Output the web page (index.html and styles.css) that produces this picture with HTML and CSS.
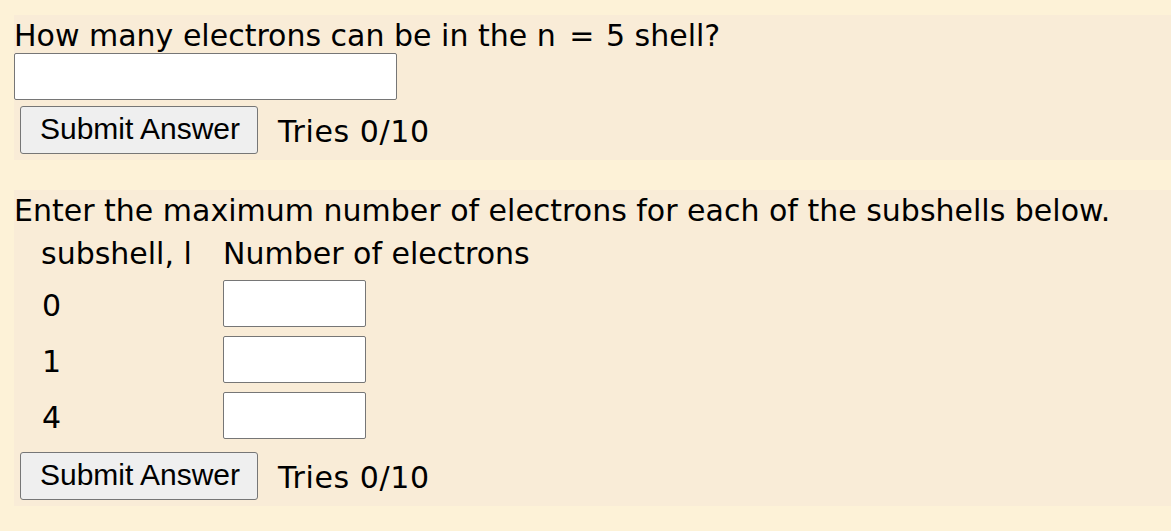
FILE: index.html
```html
<!DOCTYPE html>
<html>
<head>
<meta charset="utf-8">
<link rel="stylesheet" href="styles.css">
</head>
<body>
<div class="page">
  <section class="problem problem-one">
    <div class="question">How many electrons can be in the n <span class="op">=</span> 5 shell?</div>
    <input class="answer answer-wide" type="text">
    <div class="submit-row">
      <button class="submit" type="button">Submit Answer</button>
      <span class="tries">Tries 0/10</span>
    </div>
  </section>

  <section class="problem problem-two">
    <div class="question">Enter the maximum number of electrons for each of the subshells below.</div>
    <div class="subshell-table">
      <div class="cell head">subshell, l</div>
      <div class="cell head">Number of electrons</div>
      <div class="cell label">0</div>
      <div class="cell"><input class="answer answer-small" type="text"></div>
      <div class="cell label">1</div>
      <div class="cell"><input class="answer answer-small" type="text"></div>
      <div class="cell label">4</div>
      <div class="cell"><input class="answer answer-small" type="text"></div>
    </div>
    <div class="submit-row submit-row-two">
      <button class="submit" type="button">Submit Answer</button>
      <span class="tries">Tries 0/10</span>
    </div>
  </section>
</div>
</body>
</html>
```

FILE: styles.css
```css
html, body {
  margin: 0;
  padding: 0;
}

body {
  background: #fdf2d7;
  font-family: "DejaVu Sans", Verdana, sans-serif;
  font-size: 30px;
  color: #000;
}

.page {
  padding: 15px 0 0 14px;
  display: flex;
  flex-direction: column;
  gap: 30px;
}

.problem {
  background: #f9ecd7;
  padding: 3px 0 6px 0;
}

.question {
  line-height: 35px;
  height: 35px;
  white-space: nowrap;
}

.op {
  margin: 0 2px 0 4px;
}

.answer {
  display: block;
  box-sizing: border-box;
  background: #fff;
  border: 1px solid #767676;
  border-radius: 2px;
  margin: 0;
  padding: 0;
  font: inherit;
}

.answer-wide {
  width: 383px;
  height: 47px;
}

.answer-small {
  width: 143px;
  height: 47px;
}

.submit-row {
  display: flex;
  align-items: center;
  margin-top: 6px;
  margin-left: 6px;
  gap: 20px;
}

.submit-row-two {
  margin-top: 13px;
}

.submit {
  box-sizing: border-box;
  width: 238px;
  height: 48px;
  margin: 0;
  padding: 0;
  background: #efefef;
  border: 1px solid #767676;
  border-radius: 3px;
  font-family: "Liberation Sans", Arial, sans-serif;
  font-size: 30px;
  color: #000;
  line-height: 1;
  padding-bottom: 2px;
  padding-left: 2px;
}

.tries {
  line-height: 35px;
  padding-top: 3px;
  letter-spacing: 0.6px;
}

.subshell-table {
  display: grid;
  grid-template-columns: 182px auto;
  justify-content: start;
  row-gap: 9px;
  margin-top: 8px;
  margin-left: 27px;
}

.cell {
  line-height: 35px;
  white-space: nowrap;
}

.head {
  height: 35px;
}

.label {
  display: flex;
  align-items: center;
  padding-top: 4px;
  padding-left: 1px;
}
```
